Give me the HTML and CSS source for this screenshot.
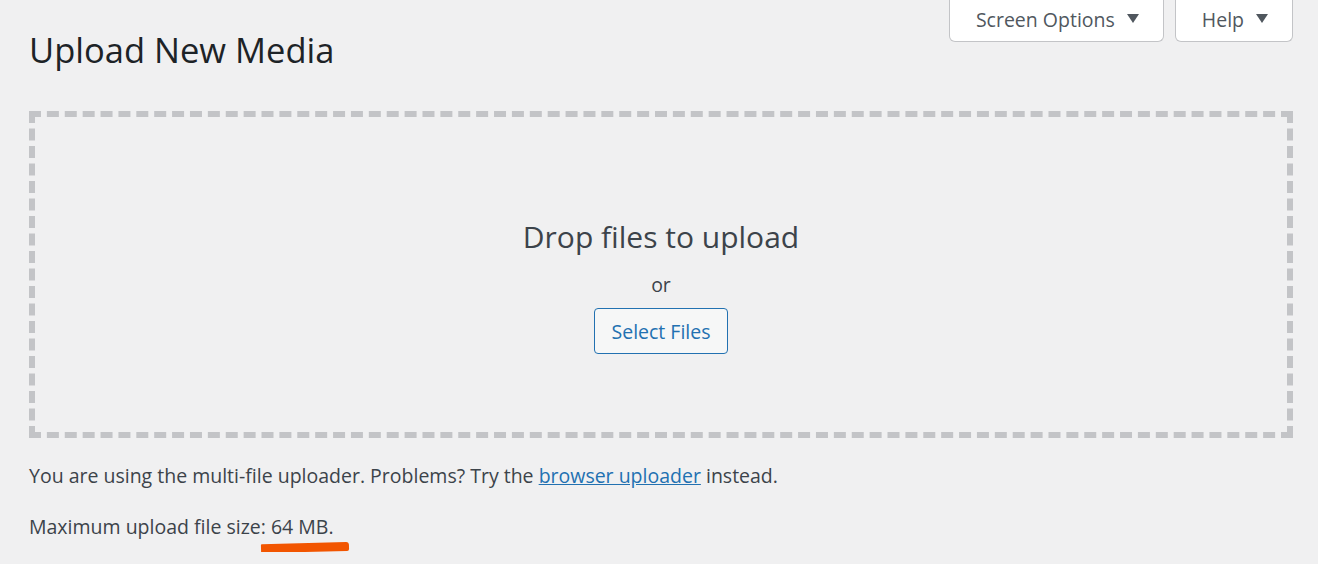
FILE: index.html
```html
<!DOCTYPE html>
<html lang="en">
<head>
<meta charset="utf-8">
<title>Upload New Media</title>
<link rel="stylesheet" href="styles.css">
</head>
<body>
<div class="page">
  <header class="head">
    <h1 class="title">Upload New Media</h1>
    <div class="meta-links">
      <button class="meta-btn" type="button">Screen Options<svg class="caret" width="12" height="9" viewBox="0 0 12 9"><polygon points="0,0 12,0 6,9" fill="#50575e"/></svg></button>
      <button class="meta-btn" type="button">Help<svg class="caret" width="12" height="9" viewBox="0 0 12 9"><polygon points="0,0 12,0 6,9" fill="#50575e"/></svg></button>
    </div>
  </header>
  <div class="dropzone">
    <p class="drop-title">Drop files to upload</p>
    <p class="drop-or">or</p>
    <button class="select-btn" type="button">Select Files</button>
  </div>
  <p class="note note-first">You are using the multi-file uploader. Problems? Try the <a href="#" class="link">browser uploader</a> instead.</p>
  <p class="note note-second">Maximum upload file size: <span class="size">64 MB.</span></p>
  <div class="mark"></div>
</div>
</body>
</html>
```
FILE: styles.css
```css
html, body {
  margin: 0;
  padding: 0;
  background: #f0f0f1;
}
body {
  font-family: "Open Sans", "Noto Sans", sans-serif;
  font-size: 19.5px;
  color: #3c434a;
}
.page {
  padding: 0 25px 0 29px;
}
.head {
  display: flex;
  justify-content: space-between;
  align-items: flex-start;
}
.title {
  margin: 27px 0 0 0;
  font-size: 34.5px;
  font-weight: 400;
  line-height: 45px;
  color: #1d2327;
}
.meta-links {
  display: flex;
  gap: 11px;
}
.meta-btn {
  display: flex;
  align-items: flex-start;
  gap: 12px;
  box-sizing: border-box;
  height: 42px;
  padding: 6px 24px 0 26px;
  font-family: inherit;
  font-size: 19.5px;
  line-height: 28px;
  color: #50575e;
  background: #fff;
  border: 1px solid #c3c4c7;
  border-top: 0;
  border-radius: 0 0 6px 6px;
}
.caret {
  margin-top: 8px;
}
.dropzone {
  box-sizing: border-box;
  height: 327px;
  margin-top: 39px;
  border: 6px dashed #c3c4c7;
  display: flex;
  flex-direction: column;
  align-items: center;
  padding-top: 97px;
}
.drop-title {
  margin: 0;
  font-size: 30px;
  line-height: 45px;
  color: #3c434a;
}
.drop-or {
  margin: 12px 0 0 0;
  line-height: 28px;
}
.select-btn {
  margin-top: 9px;
  box-sizing: border-box;
  height: 46px;
  padding: 0 16px;
  font-family: inherit;
  font-size: 19.5px;
  line-height: 45px;
  color: #2271b1;
  background: #f6f7f7;
  border: 1px solid #2271b1;
  border-radius: 4px;
}
.note {
  margin: 0;
  line-height: 28px;
}
.note-first {
  margin-top: 24px;
}
.note-second {
  margin-top: 23px;
}
.link {
  color: #2271b1;
  text-decoration: underline;
}
.mark {
  width: 88px;
  height: 9px;
  margin: 2px 0 0 232px;
  background: #f25500;
  border-radius: 1px 3px 2px 1px;
  transform: rotate(-1.5deg);
}
```
